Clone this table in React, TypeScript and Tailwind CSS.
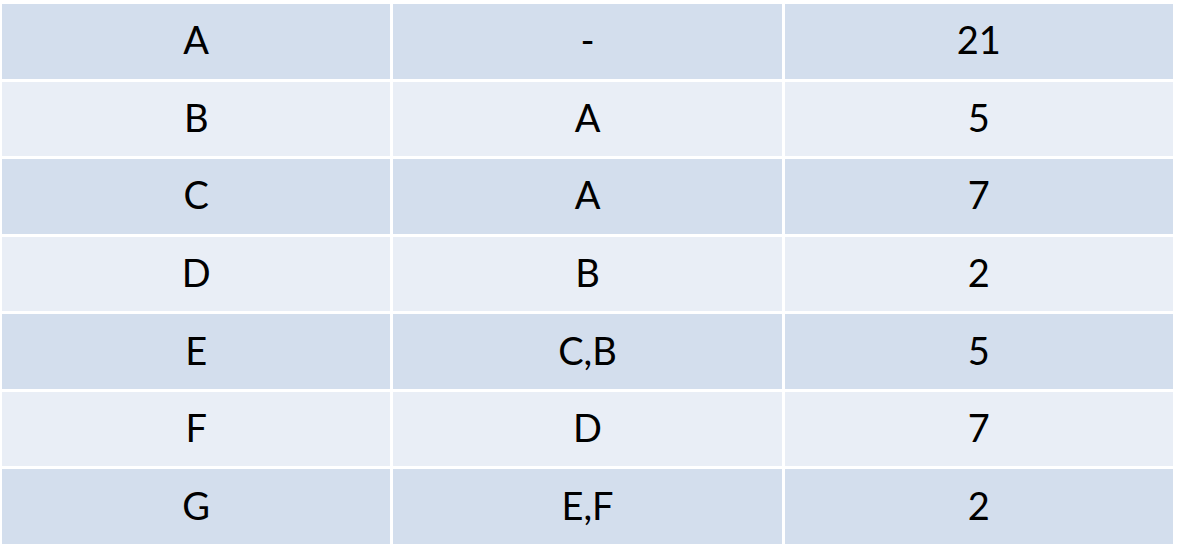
import React from "react";

const rows: [string, string, string][] = [
  ["A", "-", "21"],
  ["B", "A", "5"],
  ["C", "A", "7"],
  ["D", "B", "2"],
  ["E", "C,B", "5"],
  ["F", "D", "7"],
  ["G", "E,F", "2"],
];

export default function App() {
  return (
    <div className="w-[1180px] h-[552px] bg-white pl-[2px] pt-[4px]" style={{ fontFamily: "Lato, 'Open Sans', sans-serif" }}>
      <div className="grid grid-cols-3 grid-rows-7 gap-[3px] w-[1171px] h-[540px]">
        {rows.map((r, i) =>
          r.map((c, j) => (
            <div
              key={`${i}-${j}`}
              className={`flex items-center justify-center pb-[4px] text-[38px] text-black leading-none ${
                i % 2 === 0 ? "bg-[#d3deed]" : "bg-[#e9eef6]"
              }`}
            >
              {c}
            </div>
          ))
        )}
      </div>
    </div>
  );
}
